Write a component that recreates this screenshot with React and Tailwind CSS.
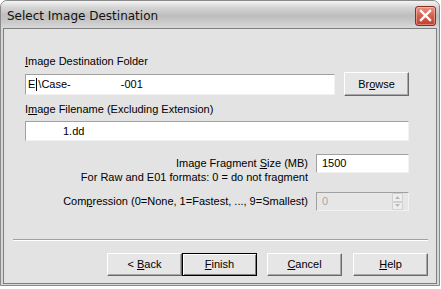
import React from "react";

function U({ children }) {
  return <span className="underline decoration-1 underline-offset-[1px]">{children}</span>;
}

function Btn({ children, def, className = "" }) {
  return (
    <div
      className={
        "h-[23px] flex items-center justify-center bg-[#e6e6e6] text-black whitespace-pre " +
        (def
          ? "border border-black shadow-[inset_1px_1px_0_#ffffff,inset_-1px_-1px_0_#808080] "
          : "border border-t-white border-l-white border-r-[#6a6a6a] border-b-[#6a6a6a] shadow-[inset_-1px_-1px_0_#a8a8a8] ") +
        className
      }
    >
      <span>{children}</span>
    </div>
  );
}

export default function App() {
  const sunken =
    "border border-t-[#a0a0a0] border-l-[#a0a0a0] border-r-[#f2f2f2] border-b-[#f2f2f2]";
  return (
    <div className="w-[441px] h-[289px] bg-white font-['Liberation_Sans',Arial,sans-serif] text-[11px] leading-[13px] text-black">
      <div className="w-[440px] h-[286px] flex flex-col bg-[#d6d6d6] border border-[#8a8a8a] rounded-t-[7px] overflow-hidden">
        {/* title bar */}
        <div className="h-[27px] shrink-0 flex items-center justify-between pl-[6px] pr-[3px] bg-[linear-gradient(to_bottom,#f5f5f5_0%,#d4d4d4_25%,#bdbdbd_55%,#cbcbcb_80%,#d8d8d8_100%)]">
          <div className="font-['DejaVu_Sans',sans-serif] text-[12px] leading-[14px] pt-[3px] text-[#111]">
            Select Image Destination
          </div>
          <div className="w-[21px] h-[20px] mt-[2px] rounded-[3px] border border-[#8a2d22] bg-[linear-gradient(to_bottom,#eb9484_0%,#d9614f_45%,#c2402f_100%)] flex items-center justify-center shadow-[inset_0_0_0_1px_rgba(255,255,255,0.35)]">
            <svg width="13" height="13" viewBox="0 0 13 13">
              <path d="M2 2 L11 11 M11 2 L2 11" stroke="white" strokeWidth="2.4" strokeLinecap="square" />
            </svg>
          </div>
        </div>
        {/* body */}
        <div className="flex-1 mx-[2px] mb-[1px] border border-[#7e7e7e] bg-[#e3e3e3] flex flex-col">
          <div className="pl-[21px] pt-[26px] flex flex-col w-[406px]">
            <div>
              <U>I</U>mage Destination Folder
            </div>
            <div className="mt-[4px] flex items-center h-[24px]">
              <div className={"w-[310px] h-[21px] bg-white flex items-center pl-[2px] whitespace-pre " + sunken}>
                <span>E</span>
                <span className="inline-block w-px h-[13px] bg-black mx-[1px]" />
                <span>\Case-</span>
                <span className="inline-block w-[50px]" />
                <span>-001</span>
              </div>
              <Btn className="ml-[9px] w-[65px] h-[24px]">
                Br<U>o</U>wse
              </Btn>
            </div>
            <div className="mt-[7px]">
              I<U>m</U>age Filename (Excluding Extension)
            </div>
            <div className={"mt-[5px] w-[384px] h-[20px] bg-white flex items-center pl-[2px] " + sunken}>
              <span className="inline-block w-[35px]" />
              <span>1.dd</span>
            </div>
            <div className="mt-[13px] w-[384px] flex justify-end gap-[8px]">
              <div className="flex flex-col items-end pt-[2px] leading-[14px]">
                <div>
                  Image Fragment <U>S</U>ize (MB)
                </div>
                <div>For Raw and E01 formats: 0 = do not fragment</div>
              </div>
              <div className={"w-[93px] h-[19px] bg-white flex items-center pl-[5px] " + sunken}>1500</div>
            </div>
            <div className="mt-[8px] w-[384px] flex justify-end items-center gap-[8px]">
              <div>
                Com<U>p</U>ression (0=None, 1=Fastest, ..., 9=Smallest)
              </div>
              <div className={"w-[93px] h-[19px] bg-[#e6e6e6] flex items-center justify-between pl-[5px] pr-[5px] text-[#a8a8a8] " + sunken}>
                <span>0</span>
                <div className="flex flex-col w-[11px] h-[17px]">
                  <div className="flex-1 flex items-center justify-center bg-[#eeeeee] border border-[#d0d0d0] rounded-[1px]">
                    <svg width="5" height="3" viewBox="0 0 5 3">
                      <path d="M0 3 L2.5 0 L5 3 Z" fill="#b8b8b8" />
                    </svg>
                  </div>
                  <div className="flex-1 flex items-center justify-center bg-[#eeeeee] border border-[#d0d0d0] rounded-[1px]">
                    <svg width="5" height="3" viewBox="0 0 5 3">
                      <path d="M0 0 L2.5 3 L5 0 Z" fill="#b8b8b8" />
                    </svg>
                  </div>
                </div>
              </div>
            </div>
          </div>
          {/* separator */}
          <div className="mt-[28px] ml-[9px] w-[415px] h-[2px] border-t border-t-[#a0a0a0] border-b border-b-white" />
          {/* buttons */}
          <div className="mt-[12px] pl-[103px] flex">
            <Btn className="w-[75px]">
              {"< "}<U>B</U>ack
            </Btn>
            <Btn def className="w-[75px]">
              <U>F</U>inish
            </Btn>
            <Btn className="ml-[10px] w-[75px]">
              <U>C</U>ancel
            </Btn>
            <Btn className="ml-[11px] w-[75px]">
              <U>H</U>elp
            </Btn>
          </div>
        </div>
      </div>
    </div>
  );
}
